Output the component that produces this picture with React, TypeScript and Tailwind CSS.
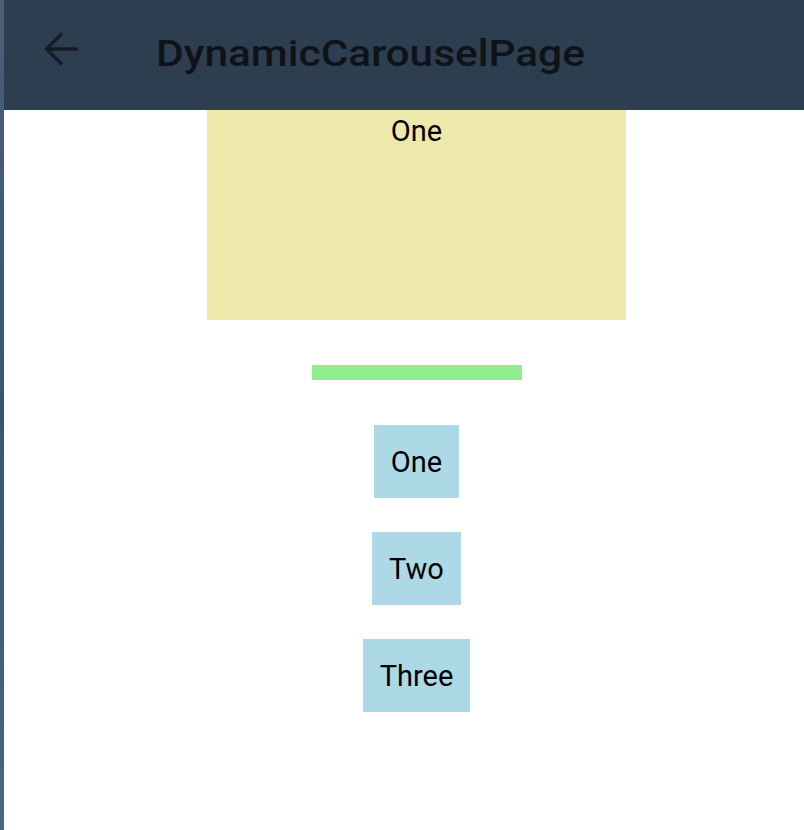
import React from "react";

export default function App() {
  return (
    <div className="w-[804px] h-[830px] overflow-hidden flex bg-white" style={{ fontFamily: "Roboto, sans-serif" }}>
      <div className="w-[4px] shrink-0 bg-gradient-to-b from-[#4a5f78] via-[#3b5472] to-[#4d6583]" />
      <div className="w-[825px] shrink-0 flex flex-col">
        <div className="h-[110px] bg-[#2d3e50] flex items-start">
          <svg className="ml-[40px] mt-[32px] w-[35px] h-[34px] shrink-0" viewBox="0 0 35 34" fill="none" stroke="#141b24" strokeWidth="3.4">
            <path d="M34 17H3M18 1.5L2.5 17L18 32.5" />
          </svg>
          <div className="ml-[77px] mt-[32px] text-[37px] leading-[44px] font-medium text-[#0f1217] whitespace-nowrap origin-left scale-x-[1.145]">
            DynamicCarouselPage
          </div>
        </div>
        <div className="flex flex-col items-center">
          <div className="w-[419px] h-[210px] bg-[#eee8aa] flex justify-center">
            <span className="text-[29px] text-black mt-[4px] leading-[34px]">One</span>
          </div>
          <div className="mt-[45px] w-[210px] h-[15px] bg-[#90ee90]" />
          <div className="mt-[45px] flex flex-col items-center gap-[34px]">
            {["One", "Two", "Three"].map((t) => (
              <div key={t} className="h-[73px] px-[17px] bg-[#add8e6] flex items-center justify-center text-[29px] leading-[34px] text-black">
                {t}
              </div>
            ))}
          </div>
        </div>
      </div>
    </div>
  );
}
